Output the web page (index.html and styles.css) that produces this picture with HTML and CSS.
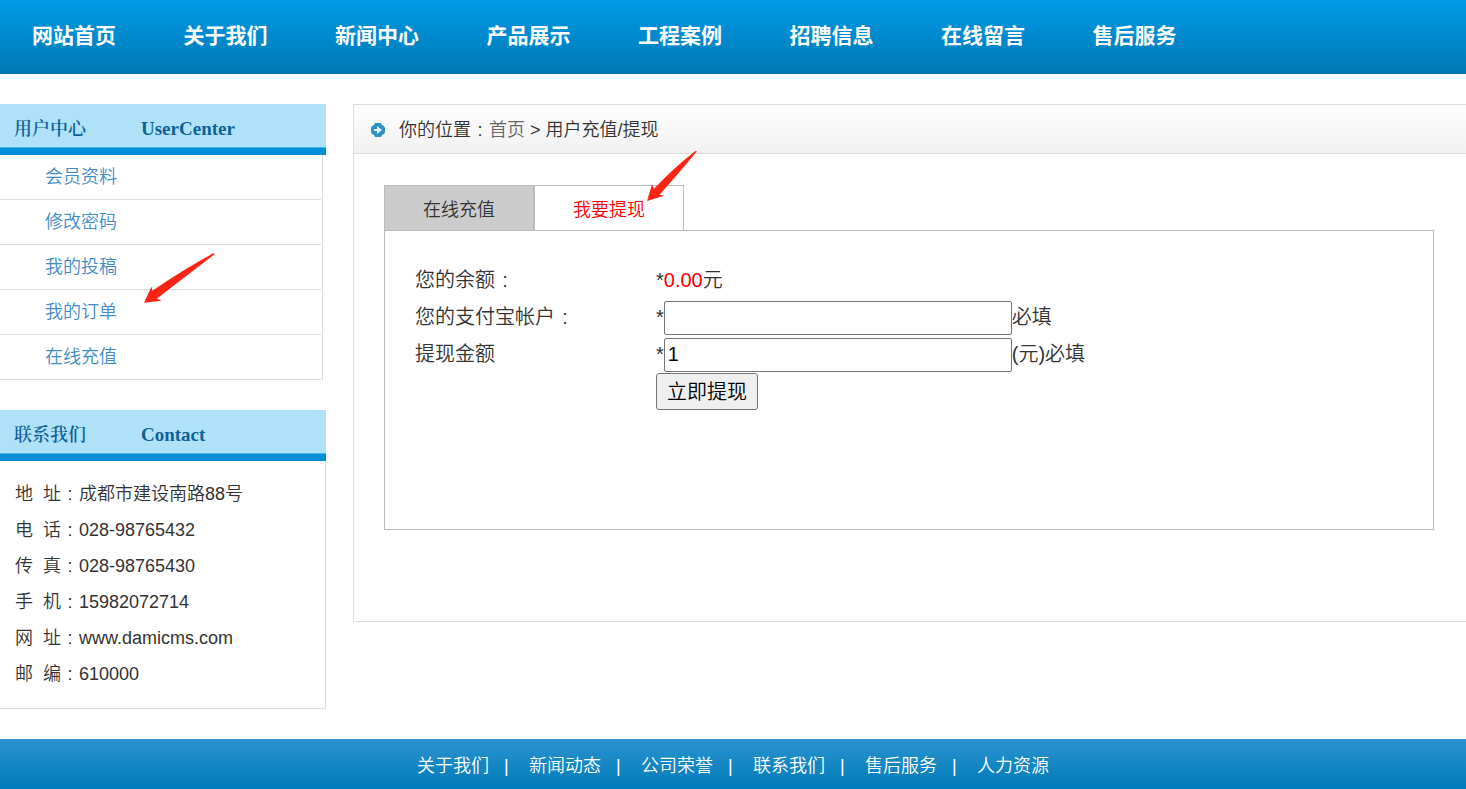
FILE: index.html
```
<!DOCTYPE html>
<html lang="zh-CN">
<head>
  <meta charset="UTF-8">
  <meta name="viewport" content="width=device-width, initial-scale=1.0">
  <title>用户充值/提现</title>
  <link rel="stylesheet" href="styles.css">
</head>
<body>
  <nav class="navbar">
    <ul class="nav-list">
      <li><a href="#">网站首页</a></li>
      <li><a href="#">关于我们</a></li>
      <li><a href="#">新闻中心</a></li>
      <li><a href="#">产品展示</a></li>
      <li><a href="#">工程案例</a></li>
      <li><a href="#">招聘信息</a></li>
      <li><a href="#">在线留言</a></li>
      <li><a href="#">售后服务</a></li>
    </ul>
  </nav>

  <div class="container">
    <aside class="sidebar">
      <!-- 用户中心 -->
      <section>
        <h2 class="side-title"><span class="cn">用户中心</span><span>UserCenter</span></h2>
        <ul class="side-menu">
          <li><a href="#">会员资料</a></li>
          <li><a href="#">修改密码</a></li>
          <li><a href="#">我的投稿</a></li>
          <li class="marked">
            <a href="#">我的订单</a>
            <svg class="arrow arrow-menu" viewBox="0 0 214 149" aria-hidden="true">
              <path d="M0 149 L23 100 L25 113 Q120 48 209 0 L214 2 L39 136 L53 143 Z"/>
            </svg>
          </li>
          <li><a href="#">在线充值</a></li>
        </ul>
      </section>

      <!-- 联系我们 -->
      <section>
        <h2 class="side-title"><span class="cn">联系我们</span><span>Contact</span></h2>
        <div class="contact">
          <p>地&nbsp; 址<span class="colon">:</span>成都市建设南路88号</p>
          <p>电&nbsp; 话<span class="colon">:</span>028-98765432</p>
          <p>传&nbsp; 真<span class="colon">:</span>028-98765430</p>
          <p>手&nbsp; 机<span class="colon">:</span>15982072714</p>
          <p>网&nbsp; 址<span class="colon">:</span>www.damicms.com</p>
          <p>邮&nbsp; 编<span class="colon">:</span>610000</p>
        </div>
      </section>
    </aside>

    <main class="content">
      <div class="position">
        <svg class="position-icon" viewBox="0 0 16 16" aria-hidden="true">
          <path d="M5 1 H11 L12 3 L14 4 L15 6 V10 L14 12 L12 13 L11 15 H5 L4 13 L2 12 L1 10 V6 L2 4 L4 3 Z" fill="#2d93c6"/>
          <path d="M4 7 H7 V4 L12 8 L7 12 V9 H4 Z" fill="#e8f5fb"/>
        </svg>
        <p>你的位置<span class="colon">:</span><a href="#">首页</a> &gt; 用户充值/提现</p>
      </div>

      <div class="content-body">
        <div class="tabs">
          <button type="button" class="tab">在线充值</button>
          <button type="button" class="tab active">我要提现</button>
          <svg class="arrow arrow-tab" viewBox="0 0 151 151" aria-hidden="true">
            <path d="M0 151 L15 101 L21 114 Q82 50 146 0 L151 1 Q94 70 38 132 L52 135 Z"/>
          </svg>
        </div>
        <form class="panel">
          <div class="row">
            <span class="label">您的余额<span class="colon">:</span></span>
            <span class="text">*<span class="money">0.00</span>元</span>
          </div>
          <div class="row">
            <label class="label" for="account">您的支付宝帐户<span class="colon">:</span></label>
            <span class="text">*</span><input type="text" id="account"><span class="text">必填</span>
          </div>
          <div class="row">
            <label class="label" for="amount">提现金额</label>
            <span class="text">*</span><input type="text" id="amount" value="1"><span class="text">(元)必填</span>
          </div>
          <div class="row">
            <span class="label"></span>
            <button type="submit" class="submit">立即提现</button>
          </div>
        </form>
      </div>
    </main>
  </div>

  <footer class="footer">
    <a href="#">关于我们</a><span class="sep">|</span>
    <a href="#">新闻动态</a><span class="sep">|</span>
    <a href="#">公司荣誉</a><span class="sep">|</span>
    <a href="#">联系我们</a><span class="sep">|</span>
    <a href="#">售后服务</a><span class="sep">|</span>
    <a href="#">人力资源</a>
  </footer>
</body>
</html>
```
FILE: styles.css
```
* {
  margin: 0;
  padding: 0;
  box-sizing: border-box;
}

body {
  font-family: "Liberation Sans", "Noto Sans CJK SC", sans-serif;
  font-size: 18px;
  font-weight: 350;
  color: #333;
  background-color: #fff;
}

ul {
  list-style: none;
}

a {
  text-decoration: none;
}

button,
input {
  font-family: inherit;
  font-weight: inherit;
}

/* 居中的全角冒号 */
.colon {
  display: inline-block;
  width: 1em;
  text-align: center;
}

/* 导航 */
.navbar {
  height: 74px;
  background: linear-gradient(#009ae6, #0079b5);
}

.nav-list {
  display: grid;
  grid-template-columns: repeat(8, 1fr);
  max-width: 1244px;
  padding-left: 32px;
}

.nav-list a {
  font-size: 21px;
  font-weight: bold;
  line-height: 72px;
  color: #fff;
}

.container {
  display: flex;
  gap: 27px;
  margin: 30px 0;
}

/* 左侧 */
.sidebar {
  display: flex;
  flex-direction: column;
  gap: 30px;
  width: 326px;
  flex-shrink: 0;
}

.side-title {
  display: flex;
  align-items: center;
  height: 51px;
  padding: 6px 0 0 14px;
  background-color: #afe2f9;
  border-bottom: 7px solid #008ed6;
  box-shadow: inset 0 -1px #4fb6e6;
  font-family: "Liberation Serif", "Noto Serif CJK SC", "Noto Sans CJK SC", serif;
  font-size: 19px;
  line-height: 24px;
  color: #0f6197;
}

.side-title .cn {
  width: 127px;
  font-size: 18px;
  font-weight: 600;
}

.side-menu {
  width: 323px;
  padding-right: 1px;
  border-right: 1px solid #ddd;
}

.side-menu li {
  height: 45px;
  padding-left: 45px;
  border-bottom: 1px solid #ddd;
  line-height: 44px;
}

.side-menu a {
  color: #428bca;
}

.marked {
  position: relative;
}

.contact {
  padding: 15px 15px 16px;
  border: 1px solid #ddd;
  border-width: 0 1px 1px 0;
  line-height: 36px;
}

/* 右侧 */
.content {
  flex: 1;
  min-height: 518px;
  align-self: flex-start;
  border: 1px solid #ddd;
  border-right: 0;
}

.position {
  display: flex;
  align-items: center;
  gap: 13px;
  height: 49px;
  padding: 2px 0 0 16px;
  background: linear-gradient(#fefefe, #f1f1f1);
  border-bottom: 1px solid #ddd;
  line-height: 24px;
}

.position-icon {
  width: 16px;
  height: 16px;
}

.position a {
  color: #666;
}

.content-body {
  padding: 31px 32px 0 30px;
}

.tabs {
  position: relative;
  display: flex;
}

.tab {
  width: 150px;
  height: 45px;
  border: 1px solid #bbb;
  border-bottom: 0;
  background-color: #ccc;
  font-size: 18px;
  color: #333;
  cursor: pointer;
}

.tab.active {
  background-color: #fff;
  color: #f00;
}

.panel {
  min-height: 300px;
  padding: 31px 30px;
  border: 1px solid #bbb;
  font-size: 20px;
}

.row {
  display: flex;
  align-items: center;
  height: 37px;
  line-height: 24px;
}

.label {
  width: 241px;
}

.label,
.text {
  padding-bottom: 2px;
}

.money {
  color: #f00;
}

.row input {
  width: 348px;
  height: 34px;
  padding: 0 3px;
  border: 1px solid #767676;
  border-radius: 2px;
  font-size: 20px;
  color: #000;
}

.submit {
  height: 37px;
  padding: 0 10px 2px;
  border: 1px solid #767676;
  border-radius: 3px;
  background-color: #efefef;
  font-size: 20px;
  color: #000;
}

/* 箭头标注 */
.arrow {
  position: absolute;
  fill: #ff2315;
}

.arrow-menu {
  left: 144px;
  top: -37px;
  width: 71px;
  height: 50px;
}

.arrow-tab {
  left: 263px;
  top: -34px;
  width: 50px;
  height: 50px;
}

/* 页脚 */
.footer {
  display: flex;
  justify-content: center;
  height: 50px;
  background: linear-gradient(#2b94d0, #007ab8);
  line-height: 54px;
  color: #fff;
}

.footer a {
  color: #fff;
}

.sep {
  width: 40px;
  padding-left: 15px;
}
```
